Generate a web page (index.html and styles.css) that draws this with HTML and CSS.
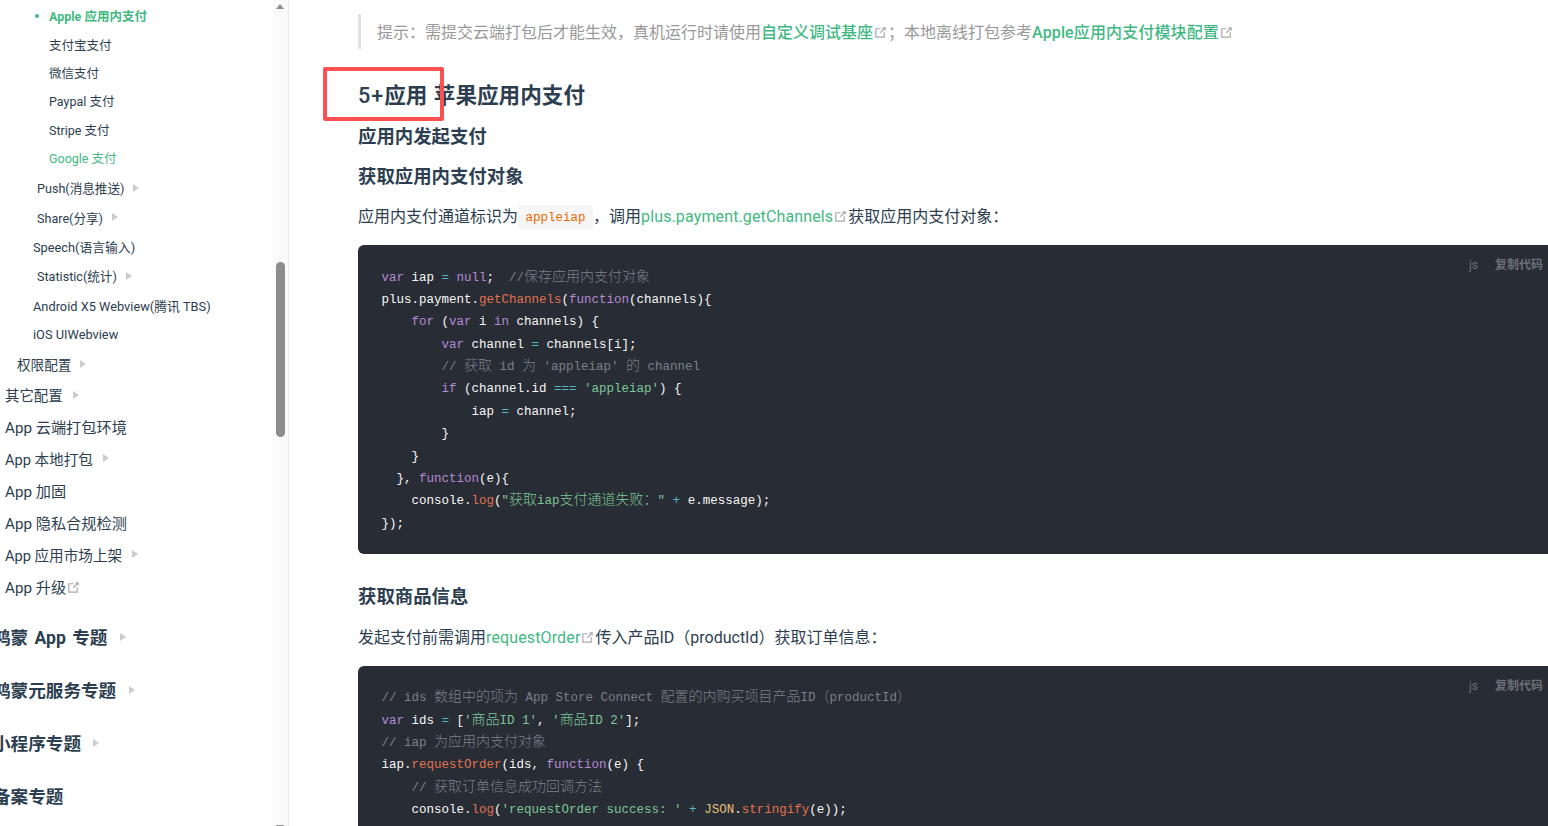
FILE: index.html
```html
<!DOCTYPE html>
<html lang="zh-CN">
<head>
<meta charset="utf-8">
<title>Apple 应用内支付</title>
<link rel="stylesheet" href="styles.css">
</head>
<body>
<svg class="defs" width="0" height="0" aria-hidden="true">
  <symbol id="ext" viewBox="0 0 100 100">
    <path fill="currentColor" d="M18.8,85.1h56l0,0c2.2,0,4-1.8,4-4v-32h-8v28h-48v-48h28v-8h-32l0,0c-2.2,0-4,1.8-4,4v56C14.8,83.3,16.6,85.1,18.8,85.1z"/>
    <polygon fill="currentColor" points="45.7,48.7 51.3,54.3 77.2,28.5 77.2,37.2 85.2,37.2 85.2,14.9 62.8,14.9 62.8,22.9 71.5,22.9"/>
  </symbol>
</svg>
<div class="page">
  <aside class="sidebar">
    <ul class="nav">
      <li class="row sub current"><span class="dot"></span>Apple 应用内支付</li>
      <li class="row sub plain">支付宝支付</li>
      <li class="row sub plain">微信支付</li>
      <li class="row sub plain">Paypal 支付</li>
      <li class="row sub plain">Stripe 支付</li>
      <li class="row sub plain active">Google 支付</li>
      <li class="row mid ind37 folder">Push(消息推送)<i class="arrow"></i></li>
      <li class="row mid ind37 folder">Share(分享)<i class="arrow"></i></li>
      <li class="row mid ind33">Speech(语言输入)</li>
      <li class="row mid ind37 folder">Statistic(统计)<i class="arrow"></i></li>
      <li class="row mid ind33">Android X5 Webview(腾讯 TBS)</li>
      <li class="row mid ind33">iOS UIWebview</li>
      <li class="row perm">权限配置<i class="arrow"></i></li>
      <li class="row other">其它配置<i class="arrow arrow-wide"></i></li>
      <li class="row app">App 云端打包环境</li>
      <li class="row app folder-app">App 本地打包<i class="arrow arrow-wide"></i></li>
      <li class="row app">App 加固</li>
      <li class="row app">App 隐私合规检测</li>
      <li class="row app folder-app">App 应用市场上架<i class="arrow arrow-wide"></i></li>
      <li class="row app">App 升级<svg class="ext ext-side"><use href="#ext"/></svg></li>
      <li class="row topic first">鸿蒙 App 专题<i class="arrow arrow-topic"></i></li>
      <li class="row topic">鸿蒙元服务专题<i class="arrow arrow-topic"></i></li>
      <li class="row topic">小程序专题<i class="arrow arrow-topic"></i></li>
      <li class="row topic">备案专题</li>
    </ul>
    <div class="scrollbar">
      <span class="sb-up"></span>
      <span class="sb-thumb"></span>
      <span class="sb-down"></span>
    </div>
  </aside>
  <main class="main">
    <div class="content">
      <blockquote class="tip">提示：需提交云端打包后才能生效，真机运行时请使用<a class="link strong">自定义调试基座</a><svg class="ext"><use href="#ext"/></svg>；本地离线打包参考<a class="link strong wide">Apple应用内支付模块配置</a><svg class="ext"><use href="#ext"/></svg></blockquote>
      <h2 class="h2"><span class="lat">5+</span>应用 苹果应用内支付</h2>
      <h3 class="h3">应用内发起支付</h3>
      <h4 class="h4">获取应用内支付对象</h4>
      <p class="para">应用内支付通道标识为<code class="inline">appleiap</code>，调用<a class="link wide">plus.payment.getChannels</a><svg class="ext"><use href="#ext"/></svg>获取应用内支付对象：</p>
      <div class="code">
        <span class="lang">js</span><span class="copy">复制代码</span>
<pre><span class="ln"><b class="k">var</b> iap <b class="o">=</b> <b class="k">null</b>;  <b class="c">//<b class="z">保存应用内支付对象</b></b></span>
<span class="ln">plus.payment.<b class="f">getChannels</b>(<b class="k">function</b>(channels){</span>
<span class="ln">    <b class="k">for</b> (<b class="k">var</b> i <b class="k">in</b> channels) {</span>
<span class="ln">        <b class="k">var</b> channel <b class="o">=</b> channels[i];</span>
<span class="ln">        <b class="c">// <b class="z">获取</b> id <b class="z">为</b> 'appleiap' <b class="z">的</b> channel</b></span>
<span class="ln">        <b class="k">if</b> (channel.id <b class="o">===</b> <b class="s">'appleiap'</b>) {</span>
<span class="ln">            iap <b class="o">=</b> channel;</span>
<span class="ln">        }</span>
<span class="ln">    }</span>
<span class="ln">  }, <b class="k">function</b>(e){</span>
<span class="ln">    console.<b class="f">log</b>(<b class="s">"<b class="z">获取</b>iap<b class="z">支付通道失败：</b>"</b> <b class="o">+</b> e.message);</span>
<span class="ln">});</span></pre>
      </div>
      <h4 class="h4 spaced">获取商品信息</h4>
      <p class="para">发起支付前需调用<a class="link wide">requestOrder</a><svg class="ext"><use href="#ext"/></svg>传入产品ID（productId）获取订单信息：</p>
      <div class="code">
        <span class="lang">js</span><span class="copy">复制代码</span>
<pre><span class="ln"><b class="c">// ids <b class="z">数组中的项为</b> App Store Connect <b class="z">配置的内购买项目产品</b>ID<b class="z">（</b>productId<b class="z">）</b></b></span>
<span class="ln"><b class="k">var</b> ids <b class="o">=</b> [<b class="s">'<b class="z">商品</b>ID 1'</b>, <b class="s">'<b class="z">商品</b>ID 2'</b>];</span>
<span class="ln"><b class="c">// iap <b class="z">为应用内支付对象</b></b></span>
<span class="ln">iap.<b class="f">requestOrder</b>(ids, <b class="k">function</b>(e) {</span>
<span class="ln">    <b class="c">// <b class="z">获取订单信息成功回调方法</b></b></span>
<span class="ln">    console.<b class="f">log</b>(<b class="s">'requestOrder success: '</b> <b class="o">+</b> <b class="y">JSON</b>.<b class="f">stringify</b>(e));</span></pre>
      </div>
    </div>
    <span class="redbox"></span>
  </main>
</div>
</body>
</html>
```
FILE: styles.css
```css
* { box-sizing: border-box; }
html, body { margin: 0; height: 826px; overflow: hidden; background: #fff; }
body {
  font-family: Roboto, "Noto Sans CJK SC", sans-serif;
  color: #2c3e50;
  font-size: 16px;
}
.defs { position: absolute; }
.page { display: flex; height: 826px; }

/* sidebar */
.sidebar {
  position: relative;
  width: 289px;
  flex: none;
  border-right: 1px solid #eaecef;
  overflow: hidden;
}
.nav { list-style: none; margin: 0; padding: 1.6px 0 0; }
.row { display: flex; align-items: center; white-space: nowrap; }
.sub { height: 28.4px; font-size: 12.5px; }
.plain { padding-left: 49px; }
.current { padding-left: 35px; color: #42b983; font-weight: 700; }
.active { color: #42b983; margin-bottom: 1px; }
.dot { width: 4px; height: 4px; border-radius: 50%; background: #42b983; margin-right: 10px; }
.mid { height: 29.4px; font-size: 12.8px; }
.folder { font-size: 12.6px; }
.ind37 { padding-left: 37px; }
.ind33 { padding-left: 33px; }
.perm { height: 30px; padding-left: 17px; font-size: 13.6px; }
.other { height: 31px; padding-left: 5px; font-size: 14.4px; }
.app { height: 32px; padding-left: 5px; font-size: 15.2px; }
.folder-app { font-size: 14.6px; }
.topic { height: 53px; margin-left: -7px; font-size: 17.6px; font-weight: 700; }
.first { margin-top: 8px; word-spacing: 2px; }
.arrow {
  width: 0; height: 0;
  margin-left: 9px;
  border-left: 6px solid #ccc;
  border-top: 4px solid transparent;
  border-bottom: 4px solid transparent;
}
.arrow-wide { margin-left: 10px; }
.arrow-topic { margin-left: 12.5px; }
.scrollbar {
  position: absolute;
  top: 0; right: 0; bottom: 0;
  width: 15px;
  background: #fafafa;
}
.sb-thumb {
  position: absolute;
  left: 3px; top: 262px;
  width: 9px; height: 175px;
  border-radius: 5px;
  background: #8c8c8c;
}
.sb-up, .sb-down {
  position: absolute;
  left: 3px;
  width: 0; height: 0;
  border-left: 4.5px solid transparent;
  border-right: 4.5px solid transparent;
}
.sb-up { top: 4px; border-bottom: 5px solid #8c8c8c; }
.sb-down { bottom: -4px; border-top: 5px solid #8c8c8c; }

/* main column */
.main { position: relative; flex: 1; min-width: 0; overflow: hidden; padding: 14px 0 0 69px; }
.content { width: 1210px; }
.tip {
  margin: 0;
  height: 35px;
  line-height: 37px;
  padding-left: 16px;
  border-left: 3px solid #dfe2e5;
  color: #999;
  white-space: nowrap;
}
.link { color: #42b983; }
.wide { letter-spacing: .13px; }
.strong { font-weight: 500; }
.ext { width: 15px; height: 15px; color: #aaa; vertical-align: -2px; }
.ext-side { align-self: center; margin-top: 3px; }
.h2 { margin: 32px 0 0; font-size: 21.6px; line-height: 30px; font-weight: 600; word-spacing: 1px; }
.lat { font-weight: 500; letter-spacing: 1px; }
.h3 { margin: 13px 0 0; font-size: 18.4px; line-height: 26px; font-weight: 600; }
.h4 { margin: 14px 0 0; font-size: 18.4px; line-height: 26px; font-weight: 600; }
.spaced { margin-top: 30px; }
.para { margin: 13px 0 0; height: 28px; line-height: 28px; white-space: nowrap; }
.h4.spaced + .para { margin-top: 14px; }
.inline {
  display: inline-block;
  height: 24px;
  line-height: 26px;
  padding: 0 7.5px;
  border-radius: 3px;
  background: #f6f6f6;
  color: #e96900;
  font-family: "Liberation Mono", "Noto Sans CJK SC", monospace;
  font-size: 12.5px;
  vertical-align: top;
  margin-top: 2px;
}
.code {
  position: relative;
  margin-top: 14px;
  padding: 21.5px 23.5px 18.5px;
  border-radius: 6px;
  background: #282c34;
  color: #f8f8f8;
  overflow: hidden;
}
.code pre { margin: 0; white-space: normal; font-family: "Liberation Mono", "Noto Sans CJK SC", monospace; font-size: 12.5px; line-height: 22.4px; }
.ln { display: block; height: 22.4px; white-space: pre; overflow: hidden; }
.code b { font-weight: 400; }
.code .z { font-family: "Noto Sans CJK SC", sans-serif; font-size: 14px; line-height: 1; font-weight: 300; }
.k { color: #b58ad6; }
.o { color: #56b6c2; }
.c { color: #7a808a; }
.s { color: #7ec699; }
.f { color: #e0734f; }
.y { color: #e5c07b; }
.lang, .copy { position: absolute; top: 12px; font-size: 12px; line-height: 16px; color: #6b7079; }
.lang { left: 1111px; }
.copy { left: 1137px; font-weight: 600; }

/* annotation drawn over the page */
.redbox {
  position: absolute;
  left: 34px; top: 67px;
  width: 121px; height: 54px;
  border: 4px solid #fd5050;
  border-radius: 2px;
}
```
